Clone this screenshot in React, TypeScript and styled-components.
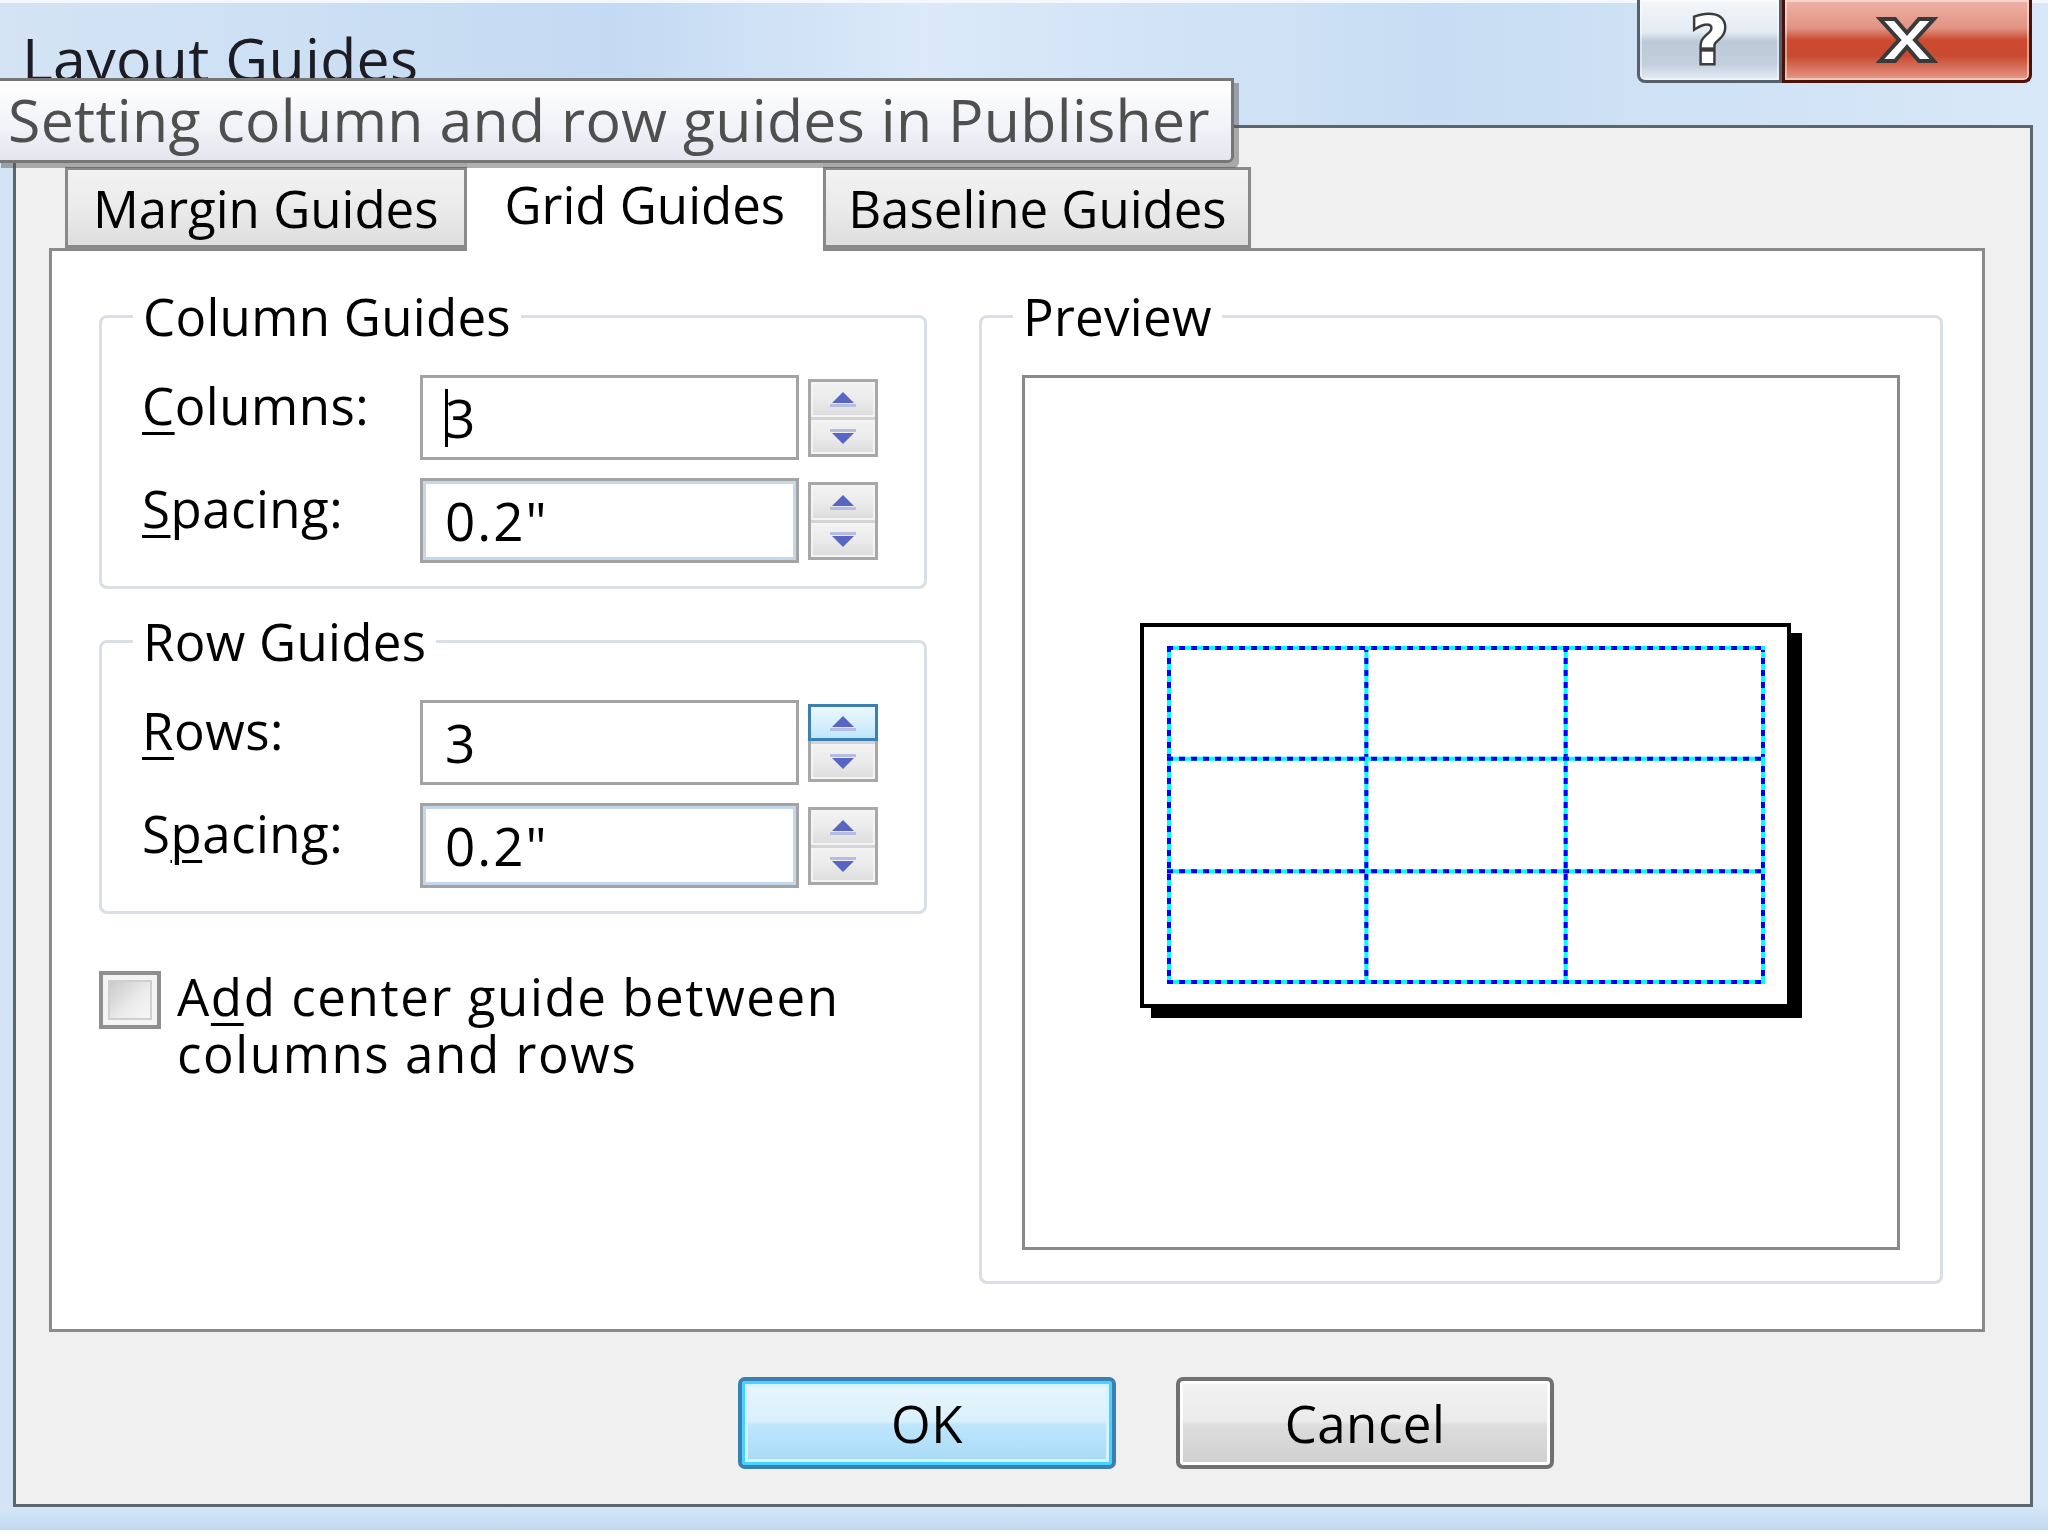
import React from "react";
import styled, { createGlobalStyle } from "styled-components";

const GlobalStyle = createGlobalStyle`
  html, body {
    margin: 0;
    padding: 0;
    background: #ffffff;
  }
  body {
    font-family: "Open Sans", "Noto Sans", "Liberation Sans", sans-serif;
  }
`;

const Window = styled.div`
  position: relative;
  width: 2048px;
  height: 1536px;
  overflow: hidden;
  display: flex;
  flex-direction: column;
  background: linear-gradient(
    to right,
    #d4e4f5 0%,
    #c4daf2 30%,
    #dbe9f9 45%,
    #c8ddf3 70%,
    #d9e8f8 100%
  );
`;

const TitleBar = styled.div`
  height: 125px;
  flex-shrink: 0;
  display: flex;
  justify-content: space-between;
  align-items: flex-start;
  border-top: 3px solid #f4f8fd;
  box-sizing: border-box;
`;

const Title = styled.div`
  padding: 22px 0 0 22px;
  font-size: 59px;
  line-height: 66px;
  letter-spacing: 0.3px;
  color: #1c1c24;
`;

const CaptionButtons = styled.div`
  display: flex;
  margin-top: -3px;
  margin-right: 16px;
`;

const CaptionButton = styled.div<{ $close?: boolean }>`
  height: 83px;
  width: ${(p) => (p.$close ? "250px" : "145px")};
  box-sizing: border-box;
  display: flex;
  align-items: center;
  justify-content: center;
  border: 3px solid ${(p) => (p.$close ? "#4a1208" : "#56606c")};
  border-top: none;
  border-radius: ${(p) => (p.$close ? "0 0 8px 0" : "0 0 0 8px")};
  background: ${(p) =>
    p.$close
      ? "linear-gradient(to bottom, #eeb2a6 0%, #e19484 35%, #cc4a30 50%, #c94a31 70%, #e69a8a 100%)"
      : "linear-gradient(to bottom, #f4f7fb 0%, #e4ebf3 40%, #bcc9d6 52%, #c2cfdc 80%, #e6edf5 100%)"};
  box-shadow: inset 0 0 0 2px rgba(255, 255, 255, 0.45);
`;

const HelpGlyph = styled.span`
  font-family: "DejaVu Sans", sans-serif;
  font-weight: bold;
  font-size: 64px;
  line-height: 1;
  color: #ffffff;
  -webkit-text-stroke: 5px #3c3c3c;
  paint-order: stroke fill;
  margin-top: 2px;
`;

const Tooltip = styled.div`
  position: absolute;
  left: -4px;
  top: 78px;
  width: 1238px;
  height: 85px;
  box-sizing: border-box;
  border: 3px solid #767676;
  border-radius: 0 0 6px 0;
  background: linear-gradient(to bottom, #ffffff 0%, #f1f2f7 60%, #e4e5ef 100%);
  box-shadow: 5px 5px 0 rgba(80, 80, 80, 0.45);
  padding-left: 9px;
  font-size: 59px;
  line-height: 76px;
  letter-spacing: 0.3px;
  color: #4f4f4f;
  white-space: nowrap;
  z-index: 5;
`;

const Client = styled.div`
  margin: 0 15px 0 13px;
  height: 1382px;
  flex-shrink: 0;
  box-sizing: border-box;
  border: 3px solid #5c6670;
  background: #f0f0f0;
  padding: 29px 45px 0 33px;
  display: flex;
  flex-direction: column;
`;

const TabStrip = styled.div`
  display: flex;
  align-items: flex-end;
  padding-left: 16px;
  height: 94px;
  position: relative;
  z-index: 2;
  margin-bottom: -3px;
`;

const Tab = styled.div<{ $active?: boolean; $pl: number; $pr: number }>`
  box-sizing: border-box;
  height: ${(p) => (p.$active ? "94px" : "81px")};
  padding: ${(p) => (p.$active ? "14px" : "0")} ${(p) => p.$pr}px 0
    ${(p) => p.$pl}px;
  margin-bottom: ${(p) => (p.$active ? "0" : "3px")};
  display: flex;
  align-items: ${(p) => (p.$active ? "flex-start" : "center")};
  border-top: 3px solid #8a8a8a;
  border-bottom: ${(p) => (p.$active ? "none" : "3px solid #8a8a8a")};
  border-left: ${(p) => (p.$active ? "none" : "3px solid #8a8a8a")};
  border-right: ${(p) => (p.$active ? "none" : "3px solid #8a8a8a")};
  background: ${(p) =>
    p.$active
      ? "#ffffff"
      : "linear-gradient(to bottom, #f2f2f2 0%, #ebebeb 50%, #dedede 100%)"};
  font-size: 51px;
  line-height: 60px;
  color: #000;
  white-space: nowrap;
`;

const Panel = styled.div`
  height: 1084px;
  box-sizing: border-box;
  border: 3px solid #8a8a8a;
  background: #ffffff;
  padding: 35px 36px 0 47px;
  display: grid;
  grid-template-columns: 828px 964px;
  column-gap: 52px;
  align-items: start;
`;

const Column = styled.div`
  display: flex;
  flex-direction: column;
`;

const Group = styled.fieldset<{ $gap?: number }>`
  margin: ${(p) => p.$gap ?? 0}px 0 0 0;
  padding: 0;
  min-width: 0;
  border: 3px solid #d9dfe4;
  border-radius: 8px;
`;

const Legend = styled.legend`
  margin-left: 31px;
  padding: 0 10px;
  font-size: 51px;
  line-height: 60px;
  letter-spacing: 0.3px;
  color: #000;
`;

const GroupBody = styled.div<{ $preview?: boolean }>`
  padding: ${(p) => (p.$preview ? "29px 40px 31px 40px" : "29px 0 23px 40px")};
  display: flex;
  flex-direction: column;
  gap: 18px;
`;

const FieldRow = styled.div`
  display: flex;
  align-items: flex-start;
`;

const Label = styled.label`
  width: 278px;
  font-size: 51px;
  line-height: 60px;
  letter-spacing: 0.5px;
  color: #000;
  u {
    text-decoration-thickness: 3px;
    text-underline-offset: 7px;
  }
`;

const Input = styled.div<{ $focus?: boolean }>`
  width: 379px;
  height: 85px;
  box-sizing: border-box;
  border: 3px solid #a3a3a3;
  box-shadow: ${(p) => (p.$focus ? "inset 0 0 0 3px #c3d8ef" : "none")};
  background: #ffffff;
  display: flex;
  align-items: center;
  padding-left: 22px;
  font-size: 53px;
  letter-spacing: 2px;
  color: #000;
`;

const Caret = styled.span`
  display: inline-block;
  width: 3px;
  height: 58px;
  background: #000;
  margin-right: -3px;
`;

const Spinner = styled.div`
  margin-left: 9px;
  margin-top: 4px;
  width: 70px;
  height: 78px;
  box-sizing: border-box;
  border: 3px solid #a8a8a8;
  background: #d4d4d4;
  display: flex;
  flex-direction: column;
  gap: 3px;
`;

const SpinButton = styled.div<{ $hover?: boolean }>`
  flex: 1;
  display: flex;
  align-items: center;
  justify-content: center;
  box-sizing: border-box;
  border: ${(p) => (p.$hover ? "3px solid #3c7fb1" : "2px solid #f4f4f4")};
  margin: ${(p) => (p.$hover ? "-3px -3px 0 -3px" : "0")};
  background: ${(p) =>
    p.$hover
      ? "linear-gradient(to bottom, #eaf6fd 0%, #d9f0fc 50%, #bee6fd 100%)"
      : "linear-gradient(to bottom, #f2f2f2 0%, #ebebeb 50%, #dddddd 100%)"};
`;

const CheckRow = styled.div`
  margin-top: 57px;
  display: flex;
  align-items: flex-start;
  gap: 16px;
`;

const CheckBox = styled.div`
  width: 62px;
  height: 58px;
  box-sizing: border-box;
  border: 4px solid #8f8f8f;
  background: #f4f4f4;
  padding: 5px;
  flex-shrink: 0;
  &::after {
    content: "";
    display: block;
    height: 100%;
    border: 2px solid #cfcfcf;
    box-sizing: border-box;
    background: linear-gradient(135deg, #cbcbcb 0%, #ececec 60%, #f6f6f6 100%);
  }
`;

const CheckLabel = styled.div`
  font-size: 51px;
  line-height: 57px;
  letter-spacing: 1.6px;
  margin-top: -3px;
  color: #000;
  u {
    text-decoration-thickness: 3px;
    text-underline-offset: 7px;
  }
`;

const PreviewBox = styled.div`
  height: 875px;
  box-sizing: border-box;
  border: 3px solid #8a8a8a;
  background: #ffffff;
  display: flex;
  align-items: center;
  justify-content: center;
`;

const Page = styled.div`
  width: 651px;
  height: 385px;
  box-sizing: border-box;
  border: 4px solid #000;
  background: #ffffff;
  box-shadow: 11px 10px 0 #000;
  margin-top: 6px;
  margin-left: 8px;
  padding: 19px 0 0 23px;
`;

const ButtonRow = styled.div`
  margin-top: 45px;
  display: flex;
  gap: 60px;
  padding-left: 689px;
`;

const PushButton = styled.div<{ $default?: boolean }>`
  width: 378px;
  height: 92px;
  box-sizing: border-box;
  border-radius: 7px;
  border: 4px solid ${(p) => (p.$default ? "#3c7fb1" : "#707070")};
  box-shadow: ${(p) =>
    p.$default
      ? "inset 0 0 0 3px #48d2ff, inset 0 0 0 6px #d5f2ff"
      : "inset 0 0 0 3px #fcfcfc"};
  background: ${(p) =>
    p.$default
      ? "linear-gradient(to bottom, #eaf6fd 0%, #d9f0fc 48%, #bee6fd 52%, #a7d9f5 100%)"
      : "linear-gradient(to bottom, #f2f2f2 0%, #ebebeb 48%, #dddddd 52%, #cfcfcf 100%)"};
  display: flex;
  align-items: center;
  justify-content: center;
  font-size: 51px;
  letter-spacing: 0.5px;
  color: #000;
`;

const BottomFrame = styled.div`
  height: 23px;
  flex-shrink: 0;
  background: linear-gradient(to bottom, #d5e6f8, #c2d8f0);
  border-bottom: 6px solid #ffffff;
`;

const UpArrow = () => (
  <svg width="30" height="20" viewBox="0 0 30 20">
    <polygon points="15,3 26,14 4,14" fill="#5766c4" />
    <rect x="2" y="15" width="26" height="3" fill="#b7bde0" />
  </svg>
);

const DownArrow = () => (
  <svg width="30" height="20" viewBox="0 0 30 20">
    <rect x="2" y="2" width="26" height="3" fill="#b7bde0" />
    <polygon points="4,6 26,6 15,17" fill="#5766c4" />
  </svg>
);

const CloseIcon = () => (
  <svg width="62" height="48" viewBox="0 0 62 48">
    <polygon
      points="4,3 19,3 31,17 43,3 58,3 39,24 58,45 43,45 31,31 19,45 4,45 23,24"
      fill="#ffffff"
      stroke="#3a3a3a"
      strokeWidth="4"
      strokeLinejoin="miter"
    />
  </svg>
);

const GuideGrid = () => {
  const w = 598;
  const h = 338;
  const xs = [2, w / 3, (2 * w) / 3, w - 2];
  const ys = [2, h / 3, (2 * h) / 3, h - 2];
  return (
    <svg width={w} height={h} viewBox={`0 0 ${w} ${h}`}>
      {xs.map((x) => (
        <g key={`v${x}`}>
          <line x1={x} y1={0} x2={x} y2={h} stroke="#00ffff" strokeWidth="4" />
          <line
            x1={x}
            y1={0}
            x2={x}
            y2={h}
            stroke="#0000ff"
            strokeWidth="4"
            strokeDasharray="6 6"
          />
        </g>
      ))}
      {ys.map((y) => (
        <g key={`h${y}`}>
          <line x1={0} y1={y} x2={w} y2={y} stroke="#00ffff" strokeWidth="4" />
          <line
            x1={0}
            y1={y}
            x2={w}
            y2={y}
            stroke="#0000ff"
            strokeWidth="4"
            strokeDasharray="6 6"
          />
        </g>
      ))}
    </svg>
  );
};

const Field: React.FC<{
  label: React.ReactNode;
  value: React.ReactNode;
  focus?: boolean;
  hoverUp?: boolean;
}> = ({ label, value, focus, hoverUp }) => (
  <FieldRow>
    <Label>{label}</Label>
    <Input $focus={focus}>{value}</Input>
    <Spinner>
      <SpinButton $hover={hoverUp}>
        <UpArrow />
      </SpinButton>
      <SpinButton>
        <DownArrow />
      </SpinButton>
    </Spinner>
  </FieldRow>
);

export default function App() {
  return (
    <>
      <GlobalStyle />
      <Window>
        <TitleBar>
          <Title>Layout Guides</Title>
          <CaptionButtons>
            <CaptionButton>
              <HelpGlyph>?</HelpGlyph>
            </CaptionButton>
            <CaptionButton $close>
              <CloseIcon />
            </CaptionButton>
          </CaptionButtons>
        </TitleBar>
        <Tooltip>Setting column and row guides in Publisher</Tooltip>
        <Client>
          <TabStrip>
            <Tab $pl={25} $pr={25}>
              Margin Guides
            </Tab>
            <Tab $active $pl={38} $pr={38}>
              Grid Guides
            </Tab>
            <Tab $pl={22} $pr={21}>
              Baseline Guides
            </Tab>
          </TabStrip>
          <Panel>
            <Column>
              <Group>
                <Legend>Column Guides</Legend>
                <GroupBody>
                  <Field
                    label={
                      <>
                        <u>C</u>olumns:
                      </>
                    }
                    value={
                      <>
                        <Caret />3
                      </>
                    }
                  />
                  <Field
                    label={
                      <>
                        <u>S</u>pacing:
                      </>
                    }
                    value={'0.2"'}
                    focus
                  />
                </GroupBody>
              </Group>
              <Group $gap={22}>
                <Legend>Row Guides</Legend>
                <GroupBody>
                  <Field
                    label={
                      <>
                        <u>R</u>ows:
                      </>
                    }
                    value="3"
                    hoverUp
                  />
                  <Field
                    label={
                      <>
                        S<u>p</u>acing:
                      </>
                    }
                    value={'0.2"'}
                    focus
                  />
                </GroupBody>
              </Group>
              <CheckRow>
                <CheckBox />
                <CheckLabel>
                  A<u>d</u>d center guide between
                  <br />
                  columns and rows
                </CheckLabel>
              </CheckRow>
            </Column>
            <Group>
              <Legend>Preview</Legend>
              <GroupBody $preview>
                <PreviewBox>
                  <Page>
                    <GuideGrid />
                  </Page>
                </PreviewBox>
              </GroupBody>
            </Group>
          </Panel>
          <ButtonRow>
            <PushButton $default>OK</PushButton>
            <PushButton>Cancel</PushButton>
          </ButtonRow>
        </Client>
        <BottomFrame />
      </Window>
    </>
  );
}
